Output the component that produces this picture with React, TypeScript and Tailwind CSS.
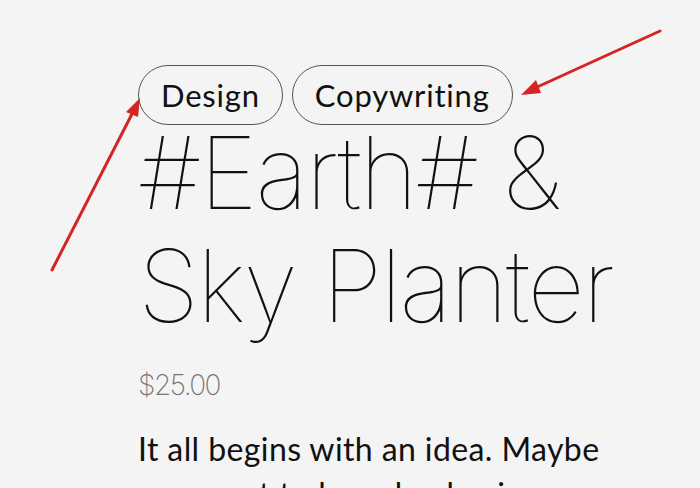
import React from "react";

export default function App() {
  return (
    <div className="relative w-[700px] h-[488px] overflow-hidden bg-[#f4f4f4]">
      <div className="pl-[138px] pt-[65px] flex flex-col">
        <div className="flex gap-[9px]">
          <span className="h-[60px] px-[22px] flex items-center rounded-full border border-[#555] text-[31px] tracking-[0.8px] text-[#111] font-['Lato',sans-serif]">
            Design
          </span>
          <span className="h-[60px] px-[22px] flex items-center rounded-full border border-[#555] text-[31px] tracking-[0.8px] text-[#111] font-['Lato',sans-serif]">
            Copywriting
          </span>
        </div>
        <h1 className="mt-[-9px] text-[100px] leading-[113px] font-thin text-[#111] font-['Inter',sans-serif] tracking-[-2.2px]">
          #Earth# &amp;
          <br />
          Sky Planter
        </h1>
        <div className="mt-[22px] text-[28px] font-extralight text-[#777] font-['Inter',sans-serif] tracking-[-1.5px]">
          $25.00
        </div>
        <p className="mt-[20px] text-[32px] leading-[45px] tracking-[0.4px] text-[#111] font-['Lato',sans-serif]">
          It all begins with an idea. Maybe
          <br />
          you want to launch a business.
        </p>
      </div>
      <svg className="absolute left-0 top-0 pointer-events-none" width="700" height="488" viewBox="0 0 700 488">
        <line x1="52" y1="270" x2="133" y2="112" stroke="#d42424" strokeWidth="3" strokeLinecap="round" />
        <polygon points="140,98 126,112 138,117" fill="#d42424" />
        <line x1="660" y1="31" x2="535" y2="88" stroke="#d42424" strokeWidth="3" strokeLinecap="round" />
        <polygon points="521,95 536,80 541,93" fill="#d42424" />
      </svg>
    </div>
  );
}
